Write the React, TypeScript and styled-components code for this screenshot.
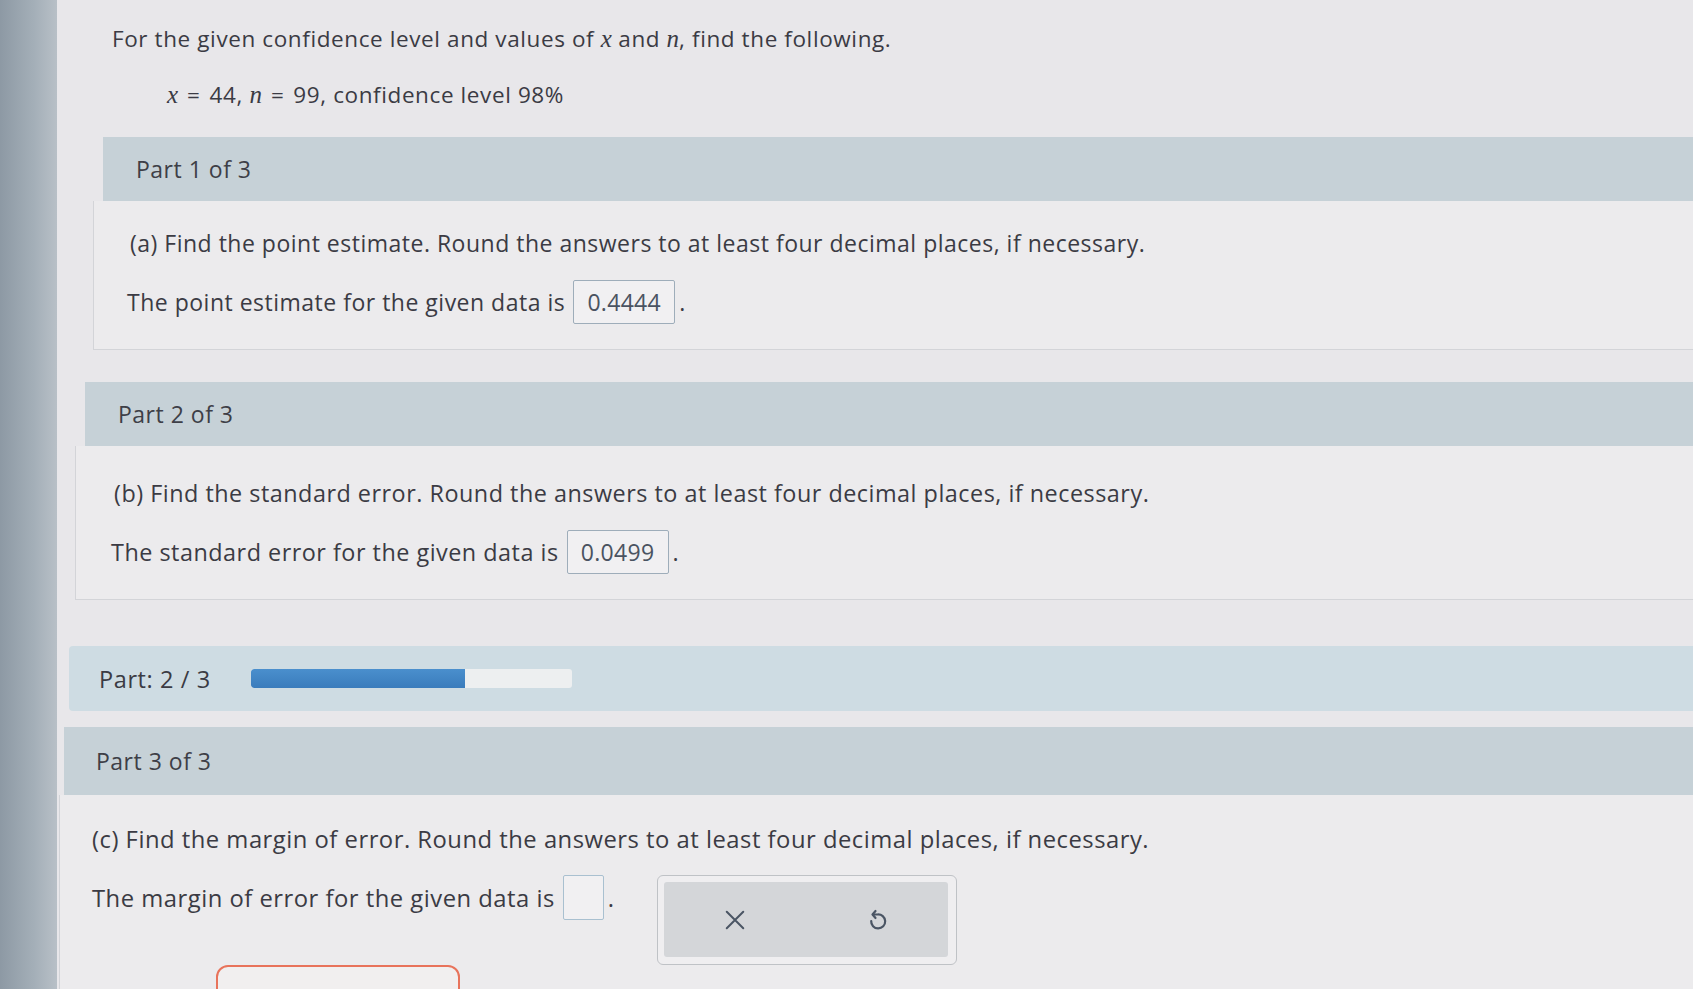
import React from 'react';
import styled, { createGlobalStyle } from 'styled-components';

const GlobalStyle = createGlobalStyle`
  html, body {
    margin: 0;
    padding: 0;
    height: 989px;
    overflow: hidden;
    background: #e7e6e9;
  }
  * { box-sizing: border-box; }
`;

const Page = styled.div`
  display: flex;
  width: 1693px;
  height: 989px;
  overflow: hidden;
  font-family: 'Open Sans', 'Liberation Sans', sans-serif;
  color: #3b3b44;
  background: #e8e7ea;
`;

const SideStrip = styled.div`
  width: 57px;
  flex-shrink: 0;
  background: linear-gradient(90deg, #8d99a4 0%, #a4afb8 60%, #b8c0c7 100%);
`;

const Main = styled.div`
  flex: 1;
  display: flex;
  flex-direction: column;
  min-width: 0;
`;

const TopBand = styled.div`
  height: 6px;
  background: #88b59f;
`;

const Intro = styled.div`
  padding: 25px 0 0 55px;
  font-size: 22.5px;
  line-height: 28px;
  letter-spacing: 0.6px;
`;

const IntroLine = styled.p<{ $indent?: number }>`
  margin: 0 0 28px ${(p) => p.$indent ?? 0}px;
`;

const MathVar = styled.span`
  font-family: 'Liberation Serif', 'DejaVu Serif', serif;
  font-style: italic;
  font-size: 25px;
  letter-spacing: 0;
`;

const Equals = styled.span`
  margin: 0 9px;
`;

const Section = styled.section<{ $left: number; $gap?: number }>`
  margin-left: ${(p) => p.$left}px;
  margin-bottom: ${(p) => p.$gap ?? 0}px;
  display: flex;
  flex-direction: column;
`;

const PartHeader = styled.div<{ $shift: number; $height: number; $pad: number }>`
  margin-left: ${(p) => p.$shift}px;
  height: ${(p) => p.$height}px;
  padding-left: ${(p) => p.$pad}px;
  display: flex;
  align-items: center;
  background: #c6d1d7;
  font-size: 23px;
  letter-spacing: 0.5px;
  color: #3e3f47;
`;

const PartBody = styled.div<{ $pad: number; $top: number; $height: number; $size: number }>`
  background: #ecebed;
  border: 1px solid #d3d4d8;
  border-top: none;
  border-right: none;
  padding: ${(p) => p.$top}px 0 0 ${(p) => p.$pad}px;
  height: ${(p) => p.$height}px;
  font-size: ${(p) => p.$size}px;
  letter-spacing: 0.5px;
  overflow: hidden;
`;

const Question = styled.p`
  margin: 0 0 20px;
  line-height: 32px;
  white-space: nowrap;
`;

const AnswerRow = styled.div<{ $indent?: number }>`
  display: flex;
  align-items: flex-start;
  margin-left: ${(p) => p.$indent ?? 0}px;
  white-space: nowrap;
`;

const Sentence = styled.div`
  display: flex;
  align-items: center;
  height: 45px;
  gap: 8px;
`;

const AnswerBox = styled.span<{ $empty?: boolean }>`
  display: inline-flex;
  align-items: center;
  justify-content: center;
  height: ${(p) => (p.$empty ? 45 : 44)}px;
  min-width: ${(p) => (p.$empty ? 41 : 102)}px;
  padding: 0 8px;
  border: 1.5px solid ${(p) => (p.$empty ? '#a9c0d0' : '#9eadba')};
  border-radius: 2px;
  background: #f1f0f2;
  font-size: 23px;
  letter-spacing: 0.3px;
  color: #4a5361;
`;

const Dot = styled.span`
  margin-left: -4px;
`;

const ProgressBand = styled.div`
  height: 65px;
  padding-left: 30px;
  display: flex;
  align-items: center;
  gap: 40px;
  background: #cedce3;
  border-radius: 4px 0 0 4px;
  font-size: 23.5px;
  letter-spacing: 0.6px;
`;

const Track = styled.div`
  width: 321px;
  height: 19px;
  border-radius: 3px;
  background: #edeff0;
  overflow: hidden;
`;

const Fill = styled.div`
  height: 100%;
  background: linear-gradient(180deg, #4a8fcd 0%, #3a7cbc 100%);
  border-radius: 3px 0 0 3px;
`;

const ActionFrame = styled.div`
  margin-left: 42px;
  width: 300px;
  height: 90px;
  padding: 6px 8px 7px 6px;
  border: 1.5px solid #bfc2c6;
  border-radius: 6px;
  background: #efeef0;
`;

const ActionPanel = styled.div`
  height: 100%;
  display: flex;
  align-items: center;
  justify-content: space-around;
  background: #d4d6d9;
  border-radius: 3px;
`;

const IconButton = styled.button`
  border: none;
  background: transparent;
  padding: 0;
  width: 30px;
  height: 30px;
  display: flex;
  align-items: center;
  justify-content: center;
  color: #4a5564;
`;

const CheckButton = styled.div`
  margin-left: 124px;
  width: 244px;
  height: 60px;
  border: 2px solid #e8735b;
  border-radius: 12px;
  background: #f1efef;
`;

const CloseIcon = () => (
  <svg width="22" height="22" viewBox="0 0 24 24" fill="none" stroke="currentColor" strokeWidth="2.2" strokeLinecap="round">
    <path d="M3 3 L21 21 M21 3 L3 21" />
  </svg>
);

const UndoIcon = () => (
  <svg width="24" height="26" viewBox="0 0 24 26" fill="none" stroke="currentColor" strokeWidth="2.2" strokeLinecap="round" strokeLinejoin="round">
    <path d="M6.2 14 A7 7 0 1 0 12.5 7.5 L8 7.5" />
    <path d="M10.5 4 L7.5 7.5 L10.5 11" />
  </svg>
);

const parts = [
  {
    label: 'Part 1 of 3',
    question: '(a) Find the point estimate. Round the answers to at least four decimal places, if necessary.',
    lead: 'The point estimate for the given data is',
    value: '0.4444',
    left: 36,
    gap: 32,
    top: 26,
    height: 149,
    pad: 36,
    size: 23,
  },
  {
    label: 'Part 2 of 3',
    question: '(b) Find the standard error. Round the answers to at least four decimal places, if necessary.',
    lead: 'The standard error for the given data is',
    value: '0.0499',
    left: 18,
    gap: 46,
    top: 31,
    height: 154,
    pad: 38,
    size: 23.4,
  },
];

const App: React.FC = () => {
  const done = 2;
  const total = 3;

  return (
    <Page>
      <GlobalStyle />
      <SideStrip />
      <Main>
        <TopBand />
        <Intro>
          <IntroLine>
            For the given confidence level and values of <MathVar>x</MathVar> and <MathVar>n</MathVar>, find the following.
          </IntroLine>
          <IntroLine $indent={55}>
            <MathVar>x</MathVar><Equals>=</Equals>44, <MathVar>n</MathVar><Equals>=</Equals>99, confidence level 98%
          </IntroLine>
        </Intro>

        {parts.map((part) => (
          <Section key={part.label} $left={part.left} $gap={part.gap}>
            <PartHeader $shift={10} $height={64} $pad={33}>{part.label}</PartHeader>
            <PartBody $pad={part.pad} $top={part.top} $height={part.height} $size={part.size}>
              <Question>{part.question}</Question>
              <AnswerRow $indent={-3}>
                <Sentence>
                  {part.lead} <AnswerBox>{part.value}</AnswerBox>
                  <Dot>.</Dot>
                </Sentence>
              </AnswerRow>
            </PartBody>
          </Section>
        ))}

        <Section $left={12} $gap={16}>
          <ProgressBand>
            <span>Part: {done} / {total}</span>
            <Track>
              <Fill style={{ width: `${(done / total) * 100}%` }} />
            </Track>
          </ProgressBand>
        </Section>

        <Section $left={2}>
          <PartHeader $shift={5} $height={68} $pad={32}>Part 3 of 3</PartHeader>
          <PartBody $pad={32} $top={28} $height={260} $size={23.8}>
            <Question>(c) Find the margin of error. Round the answers to at least four decimal places, if necessary.</Question>
            <AnswerRow>
              <Sentence>
                The margin of error for the given data is <AnswerBox $empty />
                <Dot>.</Dot>
              </Sentence>
              <ActionFrame>
                <ActionPanel>
                  <IconButton aria-label="clear"><CloseIcon /></IconButton>
                  <IconButton aria-label="undo"><UndoIcon /></IconButton>
                </ActionPanel>
              </ActionFrame>
            </AnswerRow>
            <CheckButton />
          </PartBody>
        </Section>
      </Main>
    </Page>
  );
};

export default App;
